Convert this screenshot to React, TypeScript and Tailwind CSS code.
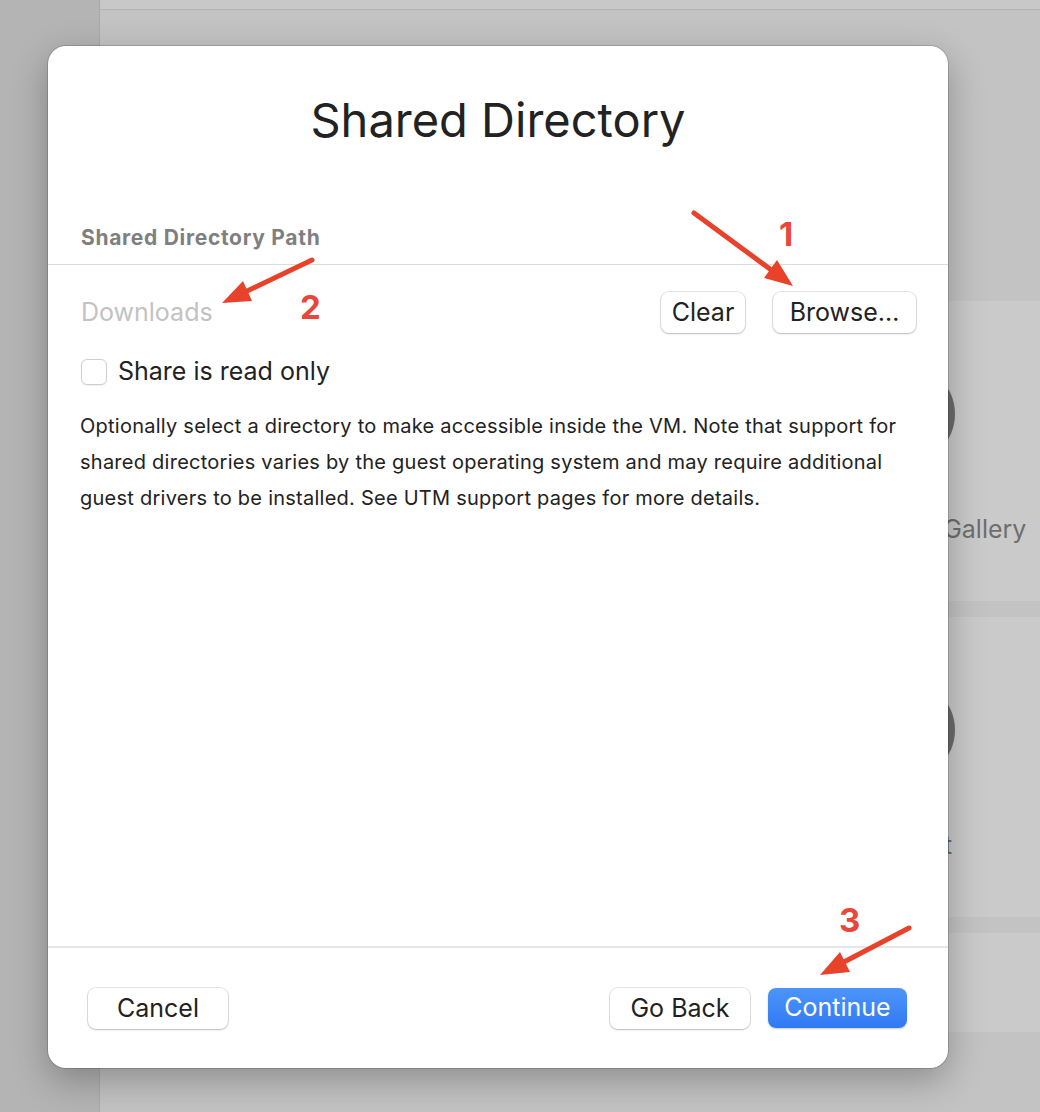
const font = { fontFamily: "Inter, 'Liberation Sans', sans-serif" };

const MacButton = ({ label, width }: { label: string; width: string }) => (
  <button
    className={`${width} h-[41px] rounded-[8px] bg-white text-[25px] leading-none text-[#222] shadow-[0_0_0_1px_rgba(0,0,0,0.1),0_1px_2px_rgba(0,0,0,0.18)]`}
  >
    {label}
  </button>
);

const WelcomeCard = ({ label, height }: { label?: string; height: string }) => (
  <div className={`${height} bg-[#cacaca]`}>
    {label && (
      <div className="ml-[100px] flex w-[250px] flex-col items-center pt-[63px]">
        <div className="h-[100px] w-[100px] rounded-full bg-[#6c6c6c]" />
        <div className="mt-[50px] whitespace-nowrap text-[25px] leading-[30px] text-[#6e6e6e]">
          {label}
        </div>
      </div>
    )}
  </div>
);

const Background = () => (
  <div className="flex h-full w-full">
    <div className="h-full w-[100px] border-r border-[#a9a9a9] bg-[#b4b4b4]" />
    <div className="flex flex-1 flex-col bg-[#c3c3c3]">
      <div className="h-[10px] border-b border-[#b2b2b2] bg-[#c8c8c8]" />
      <div className="ml-[580px] mt-[291px] flex flex-col gap-[16px]">
        <WelcomeCard label="Browse UTM Gallery" height="h-[300px]" />
        <WelcomeCard label="Support" height="h-[300px]" />
        <WelcomeCard height="h-[99px]" />
      </div>
    </div>
  </div>
);

const Annotations = () => (
  <svg className="pointer-events-none absolute inset-0" width="1040" height="1112">
    <g stroke="#e8422b" strokeWidth="5" strokeLinecap="round">
      <line x1="694" y1="213" x2="774" y2="272" />
      <line x1="312" y1="260" x2="245" y2="292" />
      <line x1="909" y1="928" x2="842" y2="963" />
    </g>
    <g fill="#e8422b">
      <polygon points="793,286 764,278 777,260" />
      <polygon points="222,303 243,281 252,301" />
      <polygon points="820,975 840,952 850,972" />
    </g>
  </svg>
);

const Num = ({ n, className }: { n: string; className: string }) => (
  <span
    className={`absolute text-[33px] font-bold leading-none text-[#e8473a] ${className}`}
  >
    {n}
  </span>
);

export default function App() {
  return (
    <div className="relative h-[1112px] w-[1040px] overflow-hidden" style={font}>
      <Background />

      <div className="absolute left-[48px] top-[46px] flex h-[1022px] w-[900px] flex-col rounded-[18px] bg-white shadow-[0_0_0_1px_rgba(0,0,0,0.15),0_12px_36px_rgba(0,0,0,0.28)]">
        <h1 className="pt-[46px] text-center text-[47px] leading-[56px] text-[#222]">
          Shared Directory
        </h1>

        <div className="mt-[77px] px-[33px] text-[21px] font-bold leading-[26px] tracking-[0.7px] text-[#7f7f7f]">
          Shared Directory Path
        </div>
        <div className="mt-[13px] h-px bg-[#dcdcdc]" />

        <div className="mt-[27px] flex h-[41px] items-center pl-[33px] pr-[32px]">
          <span className="flex-1 text-[25px] text-[#c2c2c2]">Downloads</span>
          <div className="flex gap-[28px]">
            <MacButton label="Clear" width="w-[84px]" />
            <MacButton label="Browse…" width="w-[143px]" />
          </div>
        </div>

        <label className="mt-[26px] flex h-[26px] items-center gap-[11px] px-[33px]">
          <span className="h-[26px] w-[26px] rounded-[6px] border border-[#cfcfcf] bg-white shadow-[0_1px_1px_rgba(0,0,0,0.06)]" />
          <span className="text-[25px] text-[#222]">Share is read only</span>
        </label>

        <p className="mt-[23px] whitespace-nowrap px-[32px] text-[20px] leading-[36px] tracking-[0.25px] text-[#222]">
          Optionally select a directory to make accessible inside the VM. Note that support for
          <br />
          shared directories varies by the guest operating system and may require additional
          <br />
          guest drivers to be installed. See UTM support pages for more details.
        </p>

        <div className="flex-1" />
        <div className="h-[2px] bg-[#e6e6e6]" />

        <div className="flex h-[120px] items-center pl-[40px] pr-[41px]">
          <MacButton label="Cancel" width="w-[140px]" />
          <div className="flex-1" />
          <div className="flex gap-[18px]">
            <MacButton label="Go Back" width="w-[140px]" />
            <button className="h-[40px] w-[139px] rounded-[8px] bg-gradient-to-b from-[#4d95f9] to-[#2f79f4] text-[25px] leading-none text-white shadow-[0_1px_2px_rgba(0,0,0,0.2)]">
              Continue
            </button>
          </div>
        </div>
      </div>

      <Annotations />
      <Num n="1" className="left-[779px] top-[218px]" />
      <Num n="2" className="left-[300px] top-[291px]" />
      <Num n="3" className="left-[839px] top-[904px]" />
    </div>
  );
}
